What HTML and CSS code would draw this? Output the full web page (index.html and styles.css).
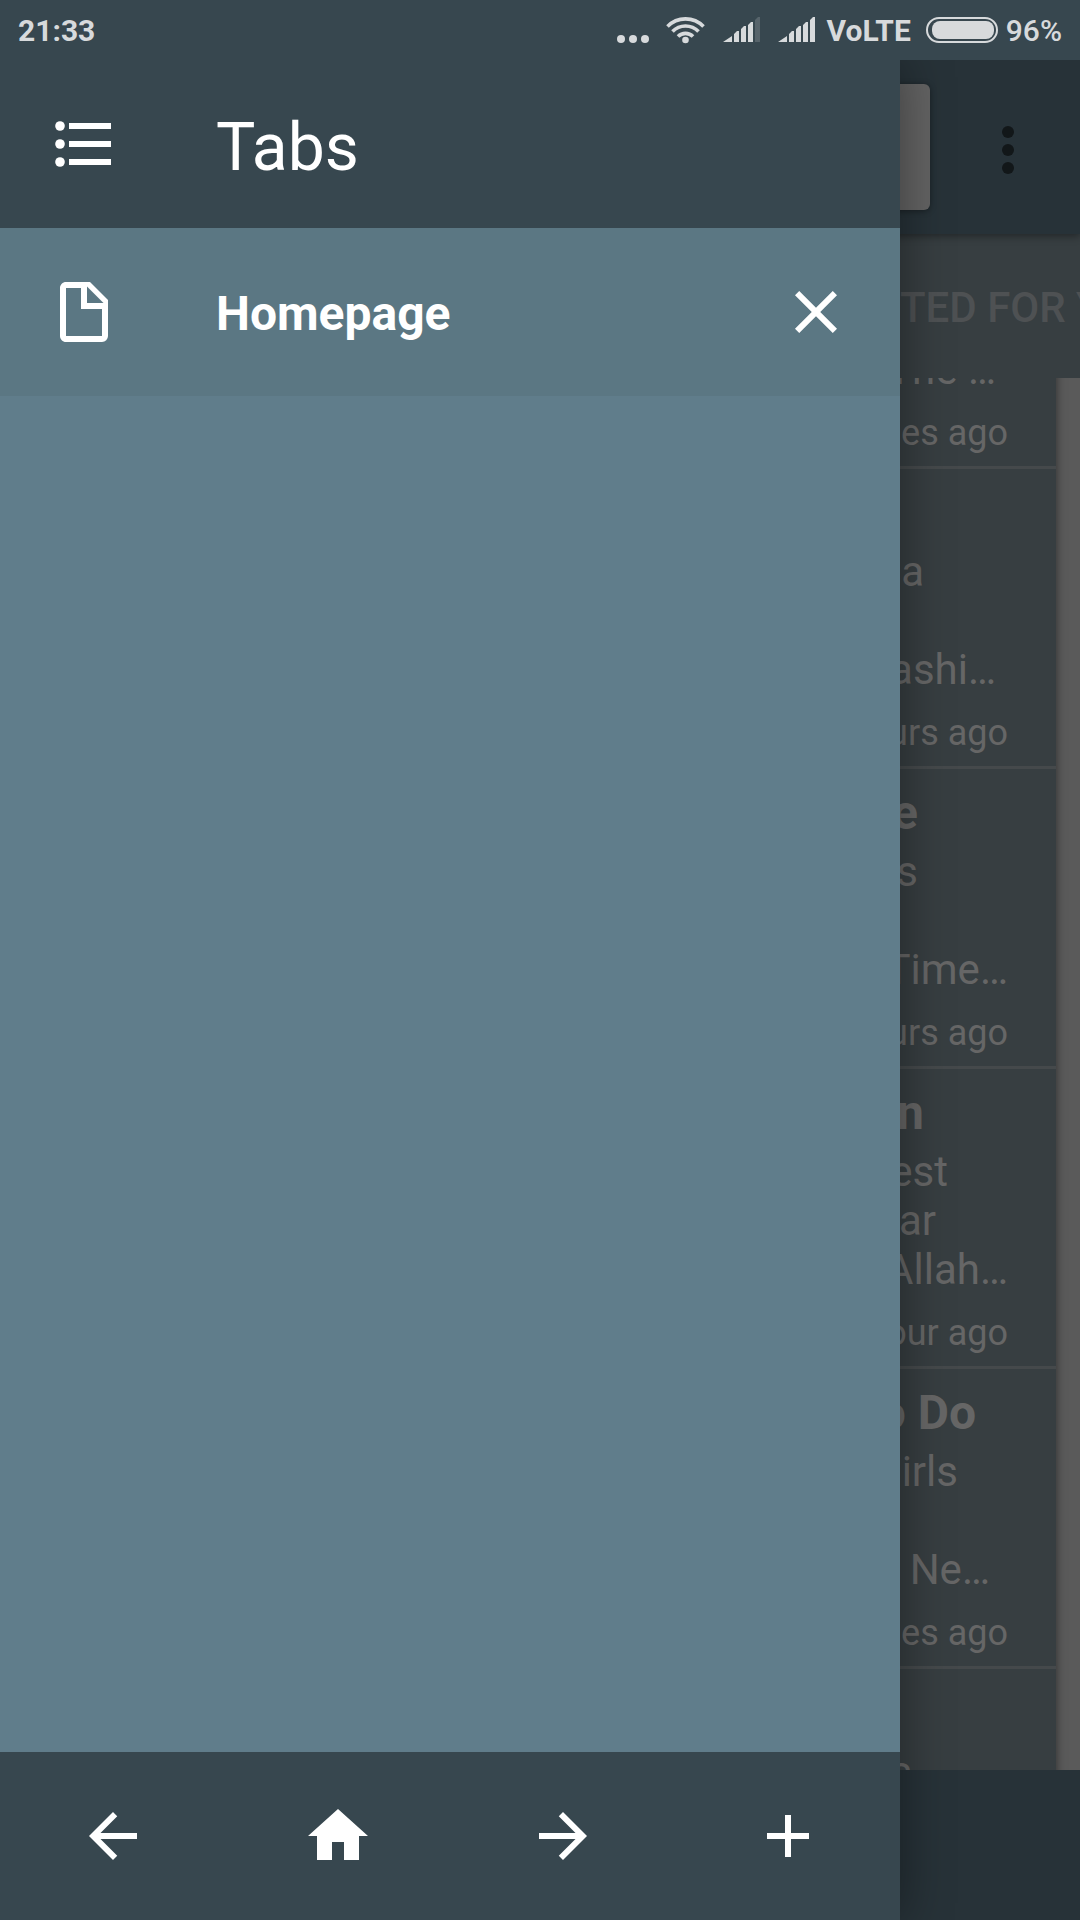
FILE: index.html
```html
<!DOCTYPE html>
<html lang="en">
  <head>
    <meta charset="UTF-8" />
    <meta name="viewport" content="width=device-width, initial-scale=1.0" />
    <title>Tabs</title>
    <link rel="stylesheet" href="styles.css">
  </head>
  <body>
    <header class="status">
      <span class="clock">21:33</span>
      <svg class="dots" width="32" height="26" viewBox="0 0 32 26">
        <circle cx="4" cy="22" r="4" />
        <circle cx="16" cy="22" r="4" />
        <circle cx="28" cy="22" r="4" />
      </svg>
      <svg class="wifi" width="39" height="28" viewBox="0 0 39 28">
        <circle cx="19.500" cy="24" r="3.300" />
        <g fill="none" stroke="#d7dadc" stroke-width="3.600">
          <path d="M1.500 10.500A25 25 0 0 1 37.500 10.500" />
          <path d="M6.500 15.500A18 18 0 0 1 32.500 15.500" />
          <path d="M12 20.500A10.500 10.500 0 0 1 27 20.500" />
        </g>
      </svg>
      <svg class="signal" width="37" height="26" viewBox="0 0 37 26">
        <path d="M0 25L9 19V25zM11 17L14 14H16V25H11zM18 12L21 9H23V25H18zM25 8L28 5H30V25H25z" />
        <path d="M32 3L35 0H37V25H32z" opacity=".2" />
      </svg>
      <svg class="signal" width="37" height="26" viewBox="0 0 37 26">
        <path d="M0 25L9 19V25zM11 17L14 14H16V25H11zM18 12L21 9H23V25H18zM25 8L28 5H30V25H25zM32 3L35 0H37V25H32z" />
      </svg>
      <span class="network">VoLTE</span>
      <svg class="battery" width="72" height="26" viewBox="0 0 72 26">
        <rect x="1" y="1" width="70" height="24" rx="12" fill="none" stroke="#d7dadc" stroke-width="2" />
        <rect x="6" y="4" width="62" height="18" rx="8" />
      </svg>
      <span class="percent">96%</span>
    </header>

    <main>
      <!-- Page under the drawer -->
      <section class="page">
        <div class="toolbar">
          <input class="search" type="text" aria-label="Search" />
          <button class="more" aria-label="More options">
            <svg class="icon" viewBox="0 0 24 24">
              <circle cx="12" cy="6" r="2" />
              <circle cx="12" cy="12" r="2" />
              <circle cx="12" cy="18" r="2" />
            </svg>
          </button>
        </div>
        <div class="sections"><a href="#">TED FOR YOU</a></div>
        <div class="feed">
          <div class="list">
            <article>
              <h2></h2>
              <p></p>
              <p></p>
              <p class="r-12">The …</p>
              <time>es ago</time>
            </article>
            <article>
              <h2></h2>
              <p class="r-84">a</p>
              <p></p>
              <p class="r-12">ashi…</p>
              <time>urs ago</time>
            </article>
            <article>
              <h2 class="r-90">e</h2>
              <p class="r-90">s</p>
              <p></p>
              <p>Time…</p>
              <time>urs ago</time>
            </article>
            <article>
              <h2 class="r-84">n</h2>
              <p class="r-60">est</p>
              <p class="r-72">ar</p>
              <p>Allah…</p>
              <time>our ago</time>
            </article>
            <article>
              <h2 class="r-32">o Do</h2>
              <p class="r-50">irls</p>
              <p></p>
              <p class="r-18">Ne…</p>
              <time>es ago</time>
            </article>
            <article>
              <h2></h2>
              <p class="r-96">s</p>
              <p></p>
              <p></p>
              <time></time>
            </article>
          </div>
        </div>
        <div class="bottom"></div>
      </section>

      <!-- Tabs drawer -->
      <aside class="drawer">
        <div class="row head">
          <svg class="icon" viewBox="0 0 24 24">
            <path d="M7 5h14v2H7zM7 11h14v2H7zM7 17h14v2H7z" />
            <circle cx="4" cy="6" r="1.600" />
            <circle cx="4" cy="12" r="1.600" />
            <circle cx="4" cy="18" r="1.600" />
          </svg>
          <h1>Tabs</h1>
        </div>
        <div class="row tab">
          <svg class="icon" viewBox="0 0 24 24">
            <path d="M13 9H18.500L13 3.500V9M6 2H14L20 8V20A2 2 0 0 1 18 22H6C4.890 22 4 21.100 4 20V4C4 2.890 4.890 2 6 2M11 4H6V20H18V11H11V4Z" />
          </svg>
          <a href="#">Homepage</a>
          <button aria-label="Close tab">
            <svg class="icon" viewBox="0 0 24 24">
              <path d="M19 6.410L17.590 5 12 10.590 6.410 5 5 6.410 10.590 12 5 17.590 6.410 19 12 13.410 17.590 19 19 17.590 13.410 12z" />
            </svg>
          </button>
        </div>
        <nav class="nav">
          <button aria-label="Back">
            <svg class="icon" viewBox="0 0 24 24">
              <path d="M20 11H7.830l5.590-5.590L12 4l-8 8 8 8 1.410-1.410L7.830 13H20v-2z" />
            </svg>
          </button>
          <button aria-label="Home">
            <svg class="icon" viewBox="0 0 24 24">
              <path d="M10 20v-6h4v6h5v-8h3L12 3 2 12h3v8z" />
            </svg>
          </button>
          <button aria-label="Forward">
            <svg class="icon" viewBox="0 0 24 24">
              <path d="M12 4l-1.410 1.410L16.170 11H4v2h12.170l-5.580 5.590L12 20l8-8z" />
            </svg>
          </button>
          <button aria-label="New tab">
            <svg class="icon" viewBox="0 0 24 24">
              <path d="M19 13h-6v6h-2v-6H5v-2h6V5h2v6h6v2z" />
            </svg>
          </button>
        </nav>
      </aside>
    </main>
  </body>
</html>
```
FILE: styles.css
```css
* {
  box-sizing: border-box;
  margin: 0;
  padding: 0;
}
body {
  font-family: Roboto, sans-serif;
  height: 100vh;
  display: flex;
  flex-direction: column;
  overflow: hidden;
  background: #37474f;
}
a {
  color: inherit;
  text-decoration: none;
}
button {
  display: flex;
  justify-content: center;
  align-items: center;
  background: none;
  border: none;
  color: inherit;
  cursor: pointer;
}
svg {
  fill: currentColor;
  flex-shrink: 0;
}
.icon {
  display: block;
  width: 72px;
  height: 72px;
}

/* Status bar */
.status {
  display: flex;
  align-items: center;
  height: 60px;
  padding: 0 18px;
  font-size: 30px;
  font-weight: 700;
  color: #d7dadc;
}
.clock {
  flex: 1;
}
.wifi {
  margin-left: 17px;
}
.signal {
  margin-left: 18px;
}
.network {
  margin-left: 12px;
}
.battery {
  margin: 0 8px 0 15px;
}
.percent {
  font-weight: 500;
}

main {
  flex: 1;
  min-height: 0;
  position: relative;
  overflow: hidden;
}

/* Dimmed page */
.page {
  height: 100%;
  display: flex;
  flex-direction: column;
  background: #5a5a5a;
  color: #666;
}
.toolbar {
  display: flex;
  align-items: center;
  gap: 42px;
  height: 174px;
  padding: 24px 36px 24px 24px;
  background: #273238;
  box-shadow: 0 2px 8px rgba(0, 0, 0, 0.4);
  z-index: 1;
}
.search {
  flex: 1;
  min-width: 0;
  height: 126px;
  border: none;
  border-radius: 6px;
  background: #636363;
  box-shadow: 0 1px 6px rgba(0, 0, 0, 0.4);
}
.more {
  padding-top: 6px;
  color: #121719;
}
.sections {
  display: flex;
  align-items: center;
  height: 144px;
  padding: 3px 0 0 calc(100% - 180px);
  background: #373e41;
  color: #4e5153;
  font-size: 42px;
  font-weight: 500;
  white-space: nowrap;
  overflow: hidden;
}
.feed {
  flex: 1;
  min-height: 0;
  overflow: hidden;
}
.list {
  margin: -209px 24px 0 0;
  background: #373e41;
  box-shadow: 0 0 9px rgba(0, 0, 0, 0.5);
}
article {
  height: 300px;
  padding: 16px 48px 12px 0;
  border-bottom: 3px solid #45494b;
  text-align: right;
}
article h2 {
  height: 56px;
  margin-bottom: 6px;
  font-size: 48px;
  line-height: 56px;
}
article p {
  height: 49px;
  font-size: 42px;
  line-height: 49px;
}
article time {
  display: block;
  margin-top: 18px;
  font-size: 36px;
  line-height: 42px;
}
.r-12 {
  padding-right: 12px;
}
.r-18 {
  padding-right: 18px;
}
.r-32 {
  padding-right: 32px;
}
.r-50 {
  padding-right: 50px;
}
.r-60 {
  padding-right: 60px;
}
.r-72 {
  padding-right: 72px;
}
.r-84 {
  padding-right: 84px;
}
.r-90 {
  padding-right: 90px;
}
.r-96 {
  padding-right: 96px;
}
.bottom {
  height: 150px;
  background: #273238;
  z-index: 1;
}

/* Drawer */
.drawer {
  position: absolute;
  top: 0;
  bottom: 0;
  left: 0;
  width: calc(100% - 180px);
  z-index: 2;
  display: flex;
  flex-direction: column;
  background: #607d8b;
  color: #fff;
  box-shadow: 0 0 48px rgba(0, 0, 0, 0.4);
}
.row {
  display: flex;
  align-items: center;
  height: 168px;
  padding: 0 48px;
}
.head {
  background: #37474f;
}
.head h1 {
  margin-left: 96px;
  padding-top: 6px;
  font-size: 66px;
  font-weight: 400;
}
.tab {
  background: #5b7783;
}
.tab a {
  flex: 1;
  margin-left: 96px;
  padding-top: 3px;
  font-size: 48px;
  font-weight: 700;
}
.nav {
  display: flex;
  height: 168px;
  margin-top: auto;
  background: #37474f;
}
.nav button {
  flex: 1;
}
```
